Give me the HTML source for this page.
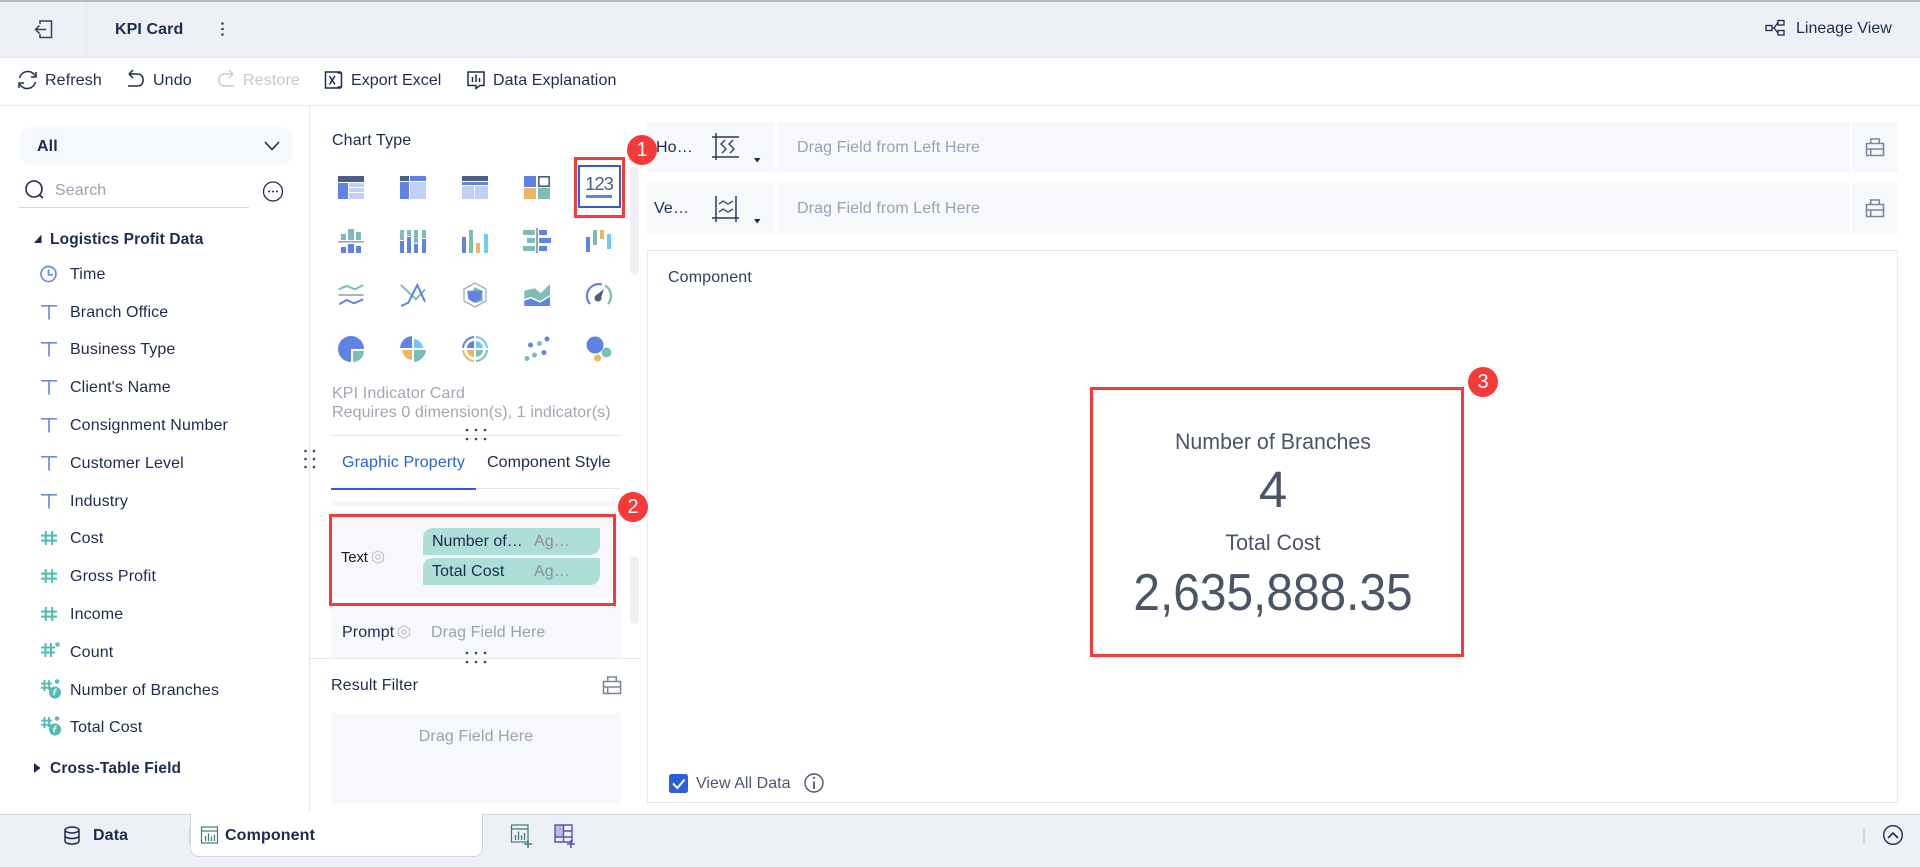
<!DOCTYPE html>
<html lang="en"><head><meta charset="utf-8"><title>KPI Card</title>
<style>
html,body{margin:0;padding:0;width:1920px;height:867px;overflow:hidden;background:#fff}
body{position:relative;font-family:"Liberation Sans",sans-serif;color:#1d2b4f}
.b{position:absolute}
.t{position:absolute;line-height:20px;height:20px;margin-top:1px;white-space:nowrap;font-size:16px;letter-spacing:.13px}
.g{color:#99a1b3}
.bd{font-weight:bold}
.r{position:absolute;border:3px solid #f63a3a;box-sizing:border-box}
.c{position:absolute;width:30px;height:30px;border-radius:50%;background:#f63a3a;color:#fff;font-size:20px;line-height:30px;text-align:center}
.k{position:absolute;left:1090px;width:366px;text-align:center;white-space:nowrap;color:#4a5568}
svg{position:absolute;left:0;top:0}
</style></head><body>
<div class="b" style="left:0;top:0;width:1920px;height:2px;background:#b9b9bb"></div>
<div class="b" style="left:0;top:2px;width:1920px;height:55px;background:#edf0f5;border-bottom:1px solid #e4e6ee;box-sizing:content-box"></div>
<div class="b" style="left:86px;top:2px;width:1px;height:55px;background:#e3e6ec"></div>
<div class="b" style="left:0;top:105px;width:1920px;height:1px;background:#e8e9ee"></div>
<div class="b" style="left:309px;top:105px;width:1px;height:709px;background:#e6e8ee"></div>
<div class="b" style="left:20px;top:127px;width:273px;height:38px;border-radius:12px;background:#f5f8fd"></div>
<div class="b" style="left:19px;top:207px;width:230px;height:1px;background:#d5d8e2"></div>

<div class="b" style="left:647px;top:122px;width:128px;height:50px;background:#f7f8fc"></div>
<div class="b" style="left:777px;top:122px;width:1073px;height:50px;background:#f7f8fc"></div>
<div class="b" style="left:1852px;top:122px;width:46px;height:50px;background:#f7f8fc"></div>
<div class="b" style="left:647px;top:183px;width:128px;height:51px;background:#f7f8fc"></div>
<div class="b" style="left:777px;top:183px;width:1073px;height:51px;background:#f7f8fc"></div>
<div class="b" style="left:1852px;top:183px;width:46px;height:51px;background:#f7f8fc"></div>
<div class="b" style="left:647px;top:250px;width:1251px;height:553px;border:1px solid #e6e8ef;box-sizing:border-box"></div>

<div class="b" style="left:630px;top:167px;width:9px;height:108px;border-radius:5px;background:#eef0f4"></div>
<div class="b" style="left:630px;top:556px;width:9px;height:68px;border-radius:5px;background:#eef0f4"></div>
<div class="b" style="left:331px;top:435px;width:290px;height:1px;background:#e4e6ec"></div>
<div class="b" style="left:331px;top:488px;width:290px;height:1px;background:#e4e6ec"></div>
<div class="b" style="left:331px;top:488px;width:145px;height:2px;background:#2c5fdc"></div>
<div class="b" style="left:331px;top:501px;width:290px;height:5px;background:#f7f8fc"></div>
<div class="b" style="left:331px;top:511px;width:290px;height:86px;background:#f7f8fc"></div>
<div class="b" style="left:331px;top:607px;width:290px;height:51px;background:#f7f8fc"></div>
<div class="b" style="left:310px;top:658px;width:330px;height:1px;background:#e4e6ec"></div>
<div class="b" style="left:331px;top:713px;width:290px;height:90px;background:#f7f8fc"></div>
<div class="b" style="left:423px;top:528px;width:177px;height:27px;background:#aeded8;border-radius:10px 0 10px 0"></div>
<div class="b" style="left:423px;top:558px;width:177px;height:27px;background:#aeded8;border-radius:10px 0 10px 0"></div>

<div class="b" style="left:0;top:814px;width:1920px;height:53px;background:#edf0f5;border-top:1px solid #d2d6e0;box-sizing:border-box"></div>
<div class="b" style="left:190px;top:813px;width:293px;height:44px;background:#fff;border:1px solid #d2d6e0;border-top:none;border-radius:0 0 9px 9px;box-sizing:border-box"></div>
<div class="b" style="left:189px;top:826px;width:1px;height:18px;background:#d2d6e0"></div>
<div class="b" style="left:1863px;top:828px;width:2px;height:16px;background:#d2d6e0"></div>

<div class="t bd" style="left:115px;top:19px;font-size:16px;letter-spacing:.1px">KPI Card</div>
<div class="t" style="left:1796px;top:18px;font-size:16px;letter-spacing:0">Lineage View</div>
<div class="t" style="left:45px;top:70px">Refresh</div>
<div class="t" style="left:153px;top:70px">Undo</div>
<div class="t" style="left:243px;top:70px;color:#c2c6d0">Restore</div>
<div class="t" style="left:351px;top:70px;letter-spacing:.05px">Export Excel</div>
<div class="t" style="left:493px;top:70px;letter-spacing:.1px">Data Explanation</div>

<div class="t bd" style="left:37px;top:136px">All</div>
<div class="t g" style="left:55px;top:180px;letter-spacing:.1px">Search</div>
<div class="t bd" style="left:50px;top:229px;font-size:15.5px">Logistics Profit Data</div>
<div class="t" style="left:70px;top:264px">Time</div>
<div class="t" style="left:70px;top:302px">Branch Office</div>
<div class="t" style="left:70px;top:339px">Business Type</div>
<div class="t" style="left:70px;top:377px">Client's Name</div>
<div class="t" style="left:70px;top:415px">Consignment Number</div>
<div class="t" style="left:70px;top:453px">Customer Level</div>
<div class="t" style="left:70px;top:491px">Industry</div>
<div class="t" style="left:70px;top:528px">Cost</div>
<div class="t" style="left:70px;top:566px">Gross Profit</div>
<div class="t" style="left:70px;top:604px">Income</div>
<div class="t" style="left:70px;top:642px">Count</div>
<div class="t" style="left:70px;top:680px">Number of Branches</div>
<div class="t" style="left:70px;top:717px">Total Cost</div>
<div class="t bd" style="left:50px;top:758px;font-size:15.5px">Cross-Table Field</div>

<div class="t" style="left:332px;top:130px">Chart Type</div>
<div class="t" style="left:585px;top:173px;width:28px;text-align:center;font-size:18.500px;letter-spacing:-1px;color:#4b5d82">123</div>
<div class="t" style="left:332px;top:383px;color:#a0a6b2">KPI Indicator Card</div>
<div class="t" style="left:332px;top:402px;color:#a0a6b2;letter-spacing:.1px">Requires 0 dimension(s), 1 indicator(s)</div>
<div class="t" style="left:342px;top:452px;color:#2c5fdc">Graphic Property</div>
<div class="t" style="left:487px;top:452px;letter-spacing:.06px">Component Style</div>
<div class="t" style="left:341px;top:547px;font-size:15px;color:#1a1a1a;letter-spacing:-.2px">Text</div>
<div class="t" style="left:432px;top:531px;letter-spacing:0">Number of…</div>
<div class="t" style="left:534px;top:531px;color:#8a8f9c">Ag…</div>
<div class="t" style="left:432px;top:561px">Total Cost</div>
<div class="t" style="left:534px;top:561px;color:#8a8f9c">Ag…</div>
<div class="t" style="left:342px;top:622px">Prompt</div>
<div class="t g" style="left:431px;top:622px;letter-spacing:.1px">Drag Field Here</div>
<div class="t" style="left:331px;top:675px">Result Filter</div>
<div class="t g" style="left:331px;top:726px;width:290px;text-align:center;letter-spacing:.1px">Drag Field Here</div>

<div class="t" style="left:656px;top:137px">Ho…</div>
<div class="t" style="left:654px;top:198px">Ve…</div>
<div class="t g" style="left:797px;top:137px;letter-spacing:.1px">Drag Field from Left Here</div>
<div class="t g" style="left:797px;top:198px;letter-spacing:.1px">Drag Field from Left Here</div>
<div class="t" style="left:668px;top:267px;color:#2e3f63">Component</div>

<div class="k" style="top:428px;font-size:22.5px;line-height:28px;transform:scaleX(.95)">Number of Branches</div>
<div class="k" style="top:460px;font-size:51px;line-height:60px">4</div>
<div class="k" style="top:529px;font-size:22.5px;line-height:28px;transform:scaleX(.95)">Total Cost</div>
<div class="k" style="top:563px;font-size:52px;line-height:60px;transform:scaleX(.92)">2,635,888.35</div>

<div class="t" style="left:696px;top:773px;color:#4a5670;letter-spacing:.05px">View All Data</div>
<div class="t bd" style="left:93px;top:825px">Data</div>
<div class="t bd" style="left:225px;top:825px">Component</div>

<svg width="1920" height="867" viewBox="0 0 1920 867" fill="none">
<defs>
<g id="T"><path d="M0 .8H16M8 .8V14.5" stroke="#6c8dd8" stroke-width="1.7"/></g>
<g id="H"><path d="M4.8 0V14M11.2 0V14M0 4.6H16M0 9.6H16" stroke="#4dbdaf" stroke-width="2"/></g>
<g id="HS"><path d="M4.5 1V15M10 1V15M0 5.5H14M0 10.5H14" stroke="#4dbdaf" stroke-width="2"/><path d="M16.5 0V5M14.3 1.3L18.7 3.7M18.7 1.3L14.3 3.700" stroke="#4dbdaf" stroke-width="1.300"/></g>
<g id="HF"><path d="M3.5 1V12M8 1V11M0 4.5H11M0 8.8H10" stroke="#4dbdaf" stroke-width="1.8"/><path d="M16 0V5M13.8 1.3L18.2 3.7M18.2 1.3L13.8 3.700" stroke="#4dbdaf" stroke-width="1.300"/><circle cx="14" cy="13.5" r="6" fill="#4dbdaf"/><path d="M15.8 10.2C14 9.8 13.6 11 13.4 12.5L12.8 16.5M11.8 12.8H15.4" stroke="#fff" stroke-width="1.2"/></g>
<g id="G"><path d="M0-6.4L5.5-3.2V3.2L0 6.4L-5.5 3.2V-3.2Z" stroke="#c2c6cf" stroke-width="1.2" stroke-linejoin="round"/><circle r="2.3" stroke="#c2c6cf" stroke-width="1.2"/></g>
<g id="B"><path d="M-8.5-3.5H8.5V8.5H-8.5ZM-4.3-3.5V-8H4.3V-3.5M-8.5 2H8.5M-4.3 2V8.5" stroke="#7b869e" stroke-width="1.6"/></g>
<g id="D" fill="#3a4660"><circle cx="0" cy="0" r="1.3"/><circle cx="9" cy="0" r="1.3"/><circle cx="18" cy="0" r="1.3"/><circle cx="0" cy="9" r="1.3"/><circle cx="9" cy="9" r="1.3"/><circle cx="18" cy="9" r="1.3"/></g>
</defs>

<!-- header -->
<path d="M40 24V21H51.500V37.500H40V34M46 29.500H35.500M39.500 25.500L35.500 29.500L39.500 33.500" stroke="#334060" stroke-width="1.500"/>
<g fill="#3a4660"><circle cx="222.500" cy="23.500" r="1.300"/><circle cx="222.500" cy="29" r="1.300"/><circle cx="222.500" cy="34.500" r="1.300"/></g>
<path d="M1772 28H1774L1778 22.500M1774 28L1778 33" stroke="#1d2b4f" stroke-width="1.300"/>
<rect x="1766" y="25.500" width="6" height="5" stroke="#1d2b4f" stroke-width="1.300"/><rect x="1778" y="20.500" width="6" height="4.500" stroke="#1d2b4f" stroke-width="1.300"/><rect x="1778" y="30.500" width="6" height="4.500" stroke="#1d2b4f" stroke-width="1.300"/>

<!-- toolbar -->
<path d="M19.500 78A8.500 8.500 0 0 1 35 75.500M35.500 82A8.500 8.500 0 0 1 20 84.500" stroke="#1d2b4f" stroke-width="1.500"/>
<path d="M36 72V77H31M19 88V83H24" stroke="#1d2b4f" stroke-width="1.500"/>
<g transform="translate(-2 0)"><path d="M131 74H139.500C147 74 147 86 139.500 86H130M131 74L135 70M131 74L135 78" stroke="#1d2b4f" stroke-width="1.500"/></g>
<g transform="translate(-1 0)"><path d="M234 74H225.500C218 74 218 86 225.500 86H235M234 74L230 70M234 74L230 78" stroke="#c8ccd5" stroke-width="1.500"/></g>
<path d="M341 72H325.500V88H341M337.500 73H341.500V87H337.500" stroke="#1d2b4f" stroke-width="1.500"/><path d="M329.500 76L335 84.500M335 76L329.500 84.500" stroke="#1d2b4f" stroke-width="1.500"/>
<path d="M468 72H484V85.500H480L476 88.500V85.500H468Z" stroke="#1d2b4f" stroke-width="1.500"/><path d="M472.500 77V82M476 74.500V82M479.500 78V82" stroke="#1d2b4f" stroke-width="1.500"/>

<!-- left panel -->
<path d="M265 142L272 149.500L279 142" stroke="#1d2b4f" stroke-width="1.600"/>
<circle cx="34" cy="189" r="8" stroke="#1d2b4f" stroke-width="1.600"/><path d="M39.500 195L43 198" stroke="#1d2b4f" stroke-width="1.600"/>
<circle cx="273" cy="191.500" r="9.500" stroke="#1d2b4f" stroke-width="1.300"/><g fill="#1d2b4f"><circle cx="269" cy="191.500" r="1"/><circle cx="273" cy="191.500" r="1"/><circle cx="277" cy="191.500" r="1"/></g>
<path d="M34 243H41.500V234.500Z" fill="#1d2b4f"/>
<path d="M34 763V773L40.500 768Z" fill="#1d2b4f"/>
<circle cx="48.500" cy="274" r="7.500" stroke="#6c8dd8" stroke-width="1.700"/><path d="M48.500 269.500V274.800H53" stroke="#6c8dd8" stroke-width="1.700"/>
<use href="#T" x="41" y="305"/><use href="#T" x="41" y="342"/><use href="#T" x="41" y="380"/><use href="#T" x="41" y="418"/><use href="#T" x="41" y="456"/><use href="#T" x="41" y="494"/>
<use href="#H" x="41" y="531"/><use href="#H" x="41" y="569"/><use href="#H" x="41" y="607"/>
<use href="#HS" x="41" y="642"/><use href="#HF" x="41" y="679"/><use href="#HF" x="41" y="716"/>
<g fill="#3a4660"><circle cx="305.500" cy="451" r="1.300"/><circle cx="314" cy="451" r="1.300"/><circle cx="305.500" cy="459" r="1.300"/><circle cx="314" cy="459" r="1.300"/><circle cx="305.500" cy="467" r="1.300"/><circle cx="314" cy="467" r="1.300"/></g>

<!-- chart row 1 -->
<g transform="translate(338 176)"><rect width="26" height="6" fill="#4b5d82"/><rect y="7" width="10" height="16" fill="#6282e3"/><rect x="11" y="7" width="15" height="4" fill="#c3d0f5"/><rect x="11" y="12" width="15" height="4" fill="#c3d0f5"/><rect x="11" y="17" width="15" height="6" fill="#c3d0f5"/></g>
<g transform="translate(400 176)"><rect width="9" height="5" fill="#4b5d82"/><rect x="10" width="16" height="5" fill="#6282e3"/><rect y="6" width="9" height="17" fill="#6282e3"/><rect x="10" y="6" width="16" height="17" fill="#c3d0f5"/></g>
<g transform="translate(462 176)"><rect width="26" height="5" fill="#4b5d82"/><rect y="6" width="26" height="3" fill="#6282e3"/><rect y="10" width="12" height="13" fill="#c3d0f5"/><rect x="13" y="10" width="13" height="13" fill="#c3d0f5"/></g>
<g transform="translate(524 176)"><rect width="12" height="11" fill="#6282e3"/><rect x="14.800" y=".8" width="10.400" height="9.400" stroke="#4b5d82" stroke-width="1.600"/><rect y="12" width="12" height="11" fill="#efb661"/><rect x="14" y="12" width="12" height="11" fill="#7cbeb5"/></g>
<rect x="586" y="195" width="26" height="3" fill="#6282e3"/>
<!-- chart row 2 -->
<g transform="translate(338 229)"><rect x="3" y="5" width="5" height="6" fill="#7cbeb5"/><rect x="10" y="0" width="6" height="11" fill="#7cbeb5"/><rect x="18" y="3" width="5" height="8" fill="#7cbeb5"/><rect y="12" width="26" height="1.600" fill="#9aa5bd"/><rect x="3" y="18" width="5" height="6" fill="#6282e3"/><rect x="10" y="15" width="6" height="9" fill="#6282e3"/><rect x="18" y="17" width="5" height="7" fill="#6282e3"/></g>
<g transform="translate(400 230)"><rect width="4" height="10" fill="#7cbeb5"/><rect y="11" width="4" height="12" fill="#6282e3"/><rect x="7" width="4" height="6" fill="#7cbeb5"/><rect x="7" y="7" width="4" height="16" fill="#6282e3"/><rect x="14" width="4" height="13" fill="#7cbeb5"/><rect x="14" y="14" width="4" height="9" fill="#6282e3"/><rect x="22" width="4" height="8" fill="#7cbeb5"/><rect x="22" y="9" width="4" height="14" fill="#6282e3"/></g>
<g transform="translate(462 230)"><rect y="7" width="4" height="16" fill="#6282e3"/><rect x="7" width="4" height="23" fill="#7cbeb5"/><rect x="14" y="13" width="4" height="10" fill="#efb661"/><rect x="22" y="4" width="4" height="19" fill="#74c6f4"/></g>
<g transform="translate(523 228)"><rect x="13" width="2" height="25" fill="#9aa5bd"/><rect y="2" width="12" height="5" fill="#7cbeb5"/><rect x="16" y="2" width="8" height="5" fill="#6282e3"/><rect x="4" y="10" width="8" height="5" fill="#7cbeb5"/><rect x="16" y="10" width="12" height="5" fill="#6282e3"/><rect y="18" width="12" height="5" fill="#7cbeb5"/><rect x="16" y="18" width="8" height="5" fill="#6282e3"/></g>
<g transform="translate(586 229)"><rect y="8" width="4" height="15" fill="#6282e3"/><rect x="7" y="1" width="4" height="15" fill="#7cbeb5"/><rect x="14" y="1" width="4" height="9" fill="#efb661"/><rect x="21" y="5" width="4" height="15" fill="#74c6f4"/></g>
<!-- chart row 3 -->
<g stroke-width="2"><path d="M338.700 289.300L346.700 286L355 289.300L363.300 285" stroke="#7cbeb5"/><path d="M338.500 295H363.500" stroke="#aab3c8"/><path d="M339.300 304.300L346.700 300L354 303.300L363.300 299.300" stroke="#6282e3"/></g>
<g stroke-width="2"><path d="M401 285L416 299.300L425 289.300" stroke="#7cbeb5"/><path d="M401 306L408.300 302.700L417.300 285L425 301.700" stroke="#6282e3"/></g>
<g><path d="M475 283L486 289V301L475 307L464 301V289Z" stroke="#a4abbf" stroke-width="1.300"/><path d="M475 287L482 291L483 301L476 303L468 298Z" fill="#7cbeb5"/><path d="M467.300 290.700H482.700L480.700 299.300L474 302.700L468.300 299.300Z" fill="#6282e3"/></g>
<g><path d="M524.300 290.700L535 288.300L540.700 293.300L550 284V295L540 301L531 297L524.300 299Z" fill="#7cbeb5"/><path d="M524.300 300.700L531 298.500L540 302.700L550 296.700V306H524.300Z" fill="#6282e3"/></g>
<g transform="translate(599 296)"><path d="M-9 8A12 12 0 0 1 3 -11.600" stroke="#6282e3" stroke-width="2.200"/><path d="M6 -10.400A12 12 0 0 1 9 8" stroke="#7cbeb5" stroke-width="2.200"/><circle cx="-1" cy="2" r="3.500" fill="#4b5d82"/><path d="M-3 -.5L5 -7L1.500 3Z" fill="#4b5d82"/></g>
<!-- chart row 4 -->
<g transform="translate(351 349)"><path d="M0 -13A13 13 0 1 0 0 13V0H13A13 13 0 0 0 0 -13Z" fill="#6282e3"/><path d="M2 2H13A11 11 0 0 1 2 13Z" fill="#7cbeb5"/></g>
<g transform="translate(413 349)"><path d="M-1 -1V-13A13 13 0 0 0 -13 -1Z" fill="#6282e3"/><path d="M1 -1V-10A10 10 0 0 1 10 -1Z" fill="#74c6f4"/><path d="M-1 1V11A11 11 0 0 1 -11 1Z" fill="#efb661"/><path d="M1 1H13A13 13 0 0 1 1 13Z" fill="#7cbeb5"/></g>
<g transform="translate(475 349)"><path d="M-1 -12A12 12 0 0 0 -12 -1" stroke="#6282e3" stroke-width="2"/><path d="M1 -12A12 12 0 0 1 12 -1" stroke="#74c6f4" stroke-width="2"/><path d="M-12 1A12 12 0 0 0 -1 12" stroke="#efb661" stroke-width="2"/><path d="M12 1A12 12 0 0 1 1 12" stroke="#7cbeb5" stroke-width="2"/><path d="M-1 -1V-8A7.500 7.500 0 0 0 -8 -1Z" fill="#6282e3"/><path d="M1 -1V-8A7.500 7.500 0 0 1 8 -1Z" fill="#74c6f4"/><path d="M-1 1V8A7.500 7.500 0 0 1 -8 1Z" fill="#efb661"/><path d="M1 1V8A7.500 7.500 0 0 0 8 1Z" fill="#7cbeb5"/></g>
<g><circle cx="530.500" cy="345" r="2.500" fill="#6282e3"/><circle cx="539.500" cy="343.500" r="2.500" fill="#7cbeb5"/><circle cx="547" cy="339" r="2.500" fill="#6282e3"/><circle cx="544" cy="352.500" r="2.500" fill="#6282e3"/><circle cx="534.500" cy="355" r="2.500" fill="#7cbeb5"/><circle cx="527" cy="358.500" r="2.500" fill="#7cbeb5"/></g>
<g><circle cx="595" cy="345" r="8.500" fill="#6282e3"/><circle cx="606.500" cy="352.500" r="5" fill="#7cbeb5"/><circle cx="597.500" cy="358" r="3.500" fill="#efb661"/></g>

<use href="#D" x="467" y="430"/><use href="#D" x="467" y="653"/>
<use href="#G" x="378" y="557"/><use href="#G" x="404" y="632"/>
<use href="#B" x="612" y="685"/><use href="#B" x="1875" y="147"/><use href="#B" x="1875" y="208"/>

<!-- axis icons -->
<g stroke="#2b3957" stroke-width="1.500">
<path d="M712 137H739M712 157H739M716 133V160"/><path d="M725 140L721 144L726 149L722 153M733 140L729 144L734 149L730 153" stroke-width="1.300"/>
<path d="M712 218H739M716 196V222M736 196V222"/><path d="M719 204L723 201L728 204L733 201M719 212L723 209L728 212L733 209" stroke-width="1.300"/>
</g>
<path d="M754 158H760.500L757.200 162.500Z" fill="#1d2b4f"/><path d="M754 219H760.500L757.200 223.500Z" fill="#1d2b4f"/>

<!-- view all data -->
<rect x="669" y="774" width="19" height="19" rx="2.500" fill="#2c5fdc"/><path d="M673 783.500L677.500 788L684.500 779.500" stroke="#fff" stroke-width="2"/>
<circle cx="814" cy="783" r="9" stroke="#4a5670" stroke-width="1.400"/><path d="M814 781.500V789" stroke="#4a5670" stroke-width="1.800"/><circle cx="814" cy="777.800" r="1.100" fill="#4a5670"/>

<!-- bottom -->
<ellipse cx="72" cy="830" rx="7" ry="3" stroke="#1d2b4f" stroke-width="1.500"/><path d="M65 830V841C65 845 79 845 79 841V830M65 835.500C65 839.500 79 839.500 79 835.500" stroke="#1d2b4f" stroke-width="1.500"/>
<rect x="201.500" y="827" width="16" height="16" stroke="#3d7d77" stroke-width="1.200"/><path d="M201.500 831H217.500" stroke="#3d7d77" stroke-width="1.200"/><path d="M205.500 841V836M208.500 841V833.500M211.500 841V836.500M214.500 841V834.500" stroke="#3d7d77" stroke-width="1.300"/>
<rect x="511.500" y="825" width="16.500" height="17" stroke="#3d7d77" stroke-width="1.200"/><path d="M511.500 829H528" stroke="#3d7d77" stroke-width="1.200"/><path d="M515.500 840V835M518.500 840V831.500M521.500 840V835.500M524.500 840V833" stroke="#3d7d77" stroke-width="1.300"/><path d="M528 840V848M524 844H532" stroke="#3d7d77" stroke-width="1.500"/>
<path d="M555 825H572V842H555ZM555 837H572M563.500 825V842M563.500 831H572M555 825" stroke="#5a50b5" stroke-width="1.400"/><rect x="555" y="825" width="8" height="11.500" fill="#5a50b5" opacity=".35"/><path d="M571 840V848M567 844H575" stroke="#5a50b5" stroke-width="1.500"/>
<circle cx="1893" cy="835" r="9.300" stroke="#1d2b4f" stroke-width="1.400"/><path d="M1888 838L1893 833L1898 838" stroke="#1d2b4f" stroke-width="1.600"/>
</svg>

<div class="r" style="left:574px;top:157px;width:51px;height:61px"></div>
<div class="b" style="left:578px;top:165px;width:43px;height:43px;border:2px solid #2c5fdc;box-sizing:border-box"></div>
<div class="r" style="left:329px;top:514px;width:287px;height:92px"></div>
<div class="r" style="left:1090px;top:387px;width:374px;height:270px"></div>
<div class="c" style="left:627px;top:135px">1</div>
<div class="c" style="left:618px;top:492px">2</div>
<div class="c" style="left:1468px;top:367px">3</div>
</body></html>
